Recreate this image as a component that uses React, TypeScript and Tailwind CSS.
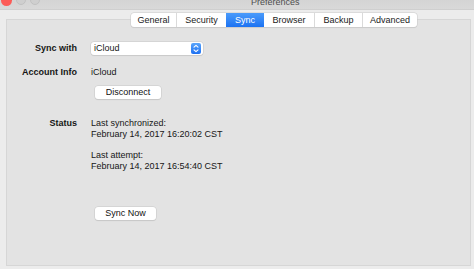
import React from "react";

const tabs = ["General", "Security", "Sync", "Browser", "Backup", "Advanced"];
const tabWidths = ["w-[45px]", "w-[50px]", "w-[38px]", "w-[50px]", "w-[48px]", "w-[55px]"];

const MacButton = ({ label, width }: { label: string; width: string }) => (
  <div
    className={`${width} h-[13px] flex items-center justify-center bg-white rounded-[3px] shadow-[0_0_0_0.5px_#c8c8c8,0_1px_1px_rgba(0,0,0,0.12)] text-[9px] leading-none text-[#111]`}
  >
    {label}
  </div>
);

const App = () => {
  return (
    <div className="w-[474px] h-[269px] overflow-hidden bg-[#ececec] flex flex-col font-['Liberation_Sans',Arial,sans-serif] text-[#161616]">
      {/* TITLE BAR */}
      <div className="h-[10px] shrink-0 bg-gradient-to-b from-[#d4d4d4] to-[#d9d9d9] border-b border-[#cfcfcf] flex items-start overflow-hidden">
        <div className="flex gap-[4px] ml-[1px] -mt-[5px]">
          <div className="w-[11px] h-[11px] rounded-full bg-[#fc5b57]" />
          <div className="w-[10px] h-[10px] rounded-full bg-[#cfcfcf] border border-[#c2c2c2]" />
          <div className="w-[10px] h-[10px] rounded-full bg-[#cfcfcf] border border-[#c2c2c2]" />
        </div>
        <div className="ml-[211px] -mt-[4px] text-[9px] leading-[12px] text-[#4e4e4e]">Preferences</div>
      </div>

      {/* TABS */}
      <div className="relative z-10 mt-[3px] ml-[131px] flex h-[14px] w-max bg-white rounded-[3px] shadow-[0_0_0_0.5px_#c9c9c9,0_1px_1px_rgba(0,0,0,0.1)]">
        {tabs.map((t, i) => (
          <div
            key={t}
            className={`${tabWidths[i]} h-full flex items-center justify-center text-[9px] leading-none ${
              t === "Sync"
                ? "bg-gradient-to-b from-[#4a9bfb] to-[#1b72f2] text-white"
                : "text-[#1a1a1a]"
            } ${i > 0 && t !== "Sync" && tabs[i - 1] !== "Sync" ? "border-l border-[#dadada]" : ""}`}
          >
            {t}
          </div>
        ))}
      </div>

      {/* PANEL */}
      <div className="-mt-[8px] ml-[6px] mr-[3px] mb-[3px] flex-1 bg-[#e3e3e3] border border-[#d6d6d6] flex flex-col text-[9px]">
        {/* Sync with */}
        <div className="mt-[22px] flex items-center h-[13px]">
          <div className="w-[70px] text-right font-bold">Sync with</div>
          <div className="ml-[14px] w-[112px] h-[13px] bg-white rounded-[3px] shadow-[0_0_0_0.5px_#c8c8c8,0_1px_1px_rgba(0,0,0,0.1)] flex items-center justify-between pl-[3px] pr-[2px]">
            <span className="leading-none">iCloud</span>
            <div className="w-[10px] h-[11px] rounded-[2px] bg-gradient-to-b from-[#5aa5fb] to-[#1b6ff1] flex items-center justify-center">
              <svg width="6" height="9" viewBox="0 0 6 9" fill="none" stroke="white" strokeWidth="1.1" strokeLinecap="round" strokeLinejoin="round">
                <path d="M1 3.2 L3 1.3 L5 3.2" />
                <path d="M1 5.8 L3 7.7 L5 5.8" />
              </svg>
            </div>
          </div>
        </div>

        {/* Account Info */}
        <div className="mt-[12px] flex items-center h-[12px]">
          <div className="w-[70px] text-right font-bold">Account Info</div>
          <div className="ml-[14px]">iCloud</div>
        </div>

        <div className="mt-[7px] ml-[88px]">
          <MacButton label="Disconnect" width="w-[66px]" />
        </div>

        {/* Status */}
        <div className="mt-[19px] flex items-start leading-[11px]">
          <div className="w-[70px] text-right font-bold">Status</div>
          <div className="ml-[14px] flex flex-col">
            <span>Last synchronized:</span>
            <span>February 14, 2017 16:20:02 CST</span>
            <span className="mt-[10px]">Last attempt:</span>
            <span>February 14, 2017 16:54:40 CST</span>
          </div>
        </div>

        <div className="mt-[35px] ml-[88px]">
          <MacButton label="Sync Now" width="w-[61px]" />
        </div>
      </div>
    </div>
  );
};

export default App;
